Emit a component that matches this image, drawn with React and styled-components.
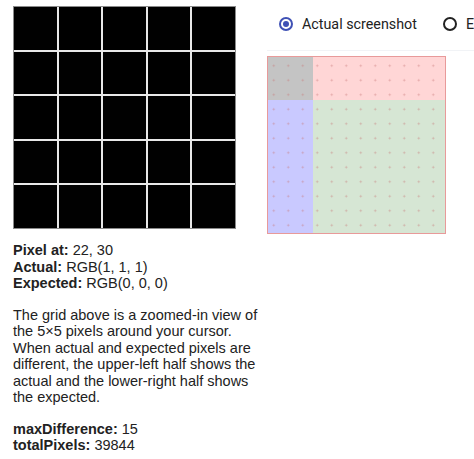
import React from "react";
import styled, { createGlobalStyle } from "styled-components";

const GlobalStyle = createGlobalStyle`
  html, body {
    margin: 0;
    padding: 0;
    background: #fff;
    overflow: hidden;
  }
  body {
    font-family: "Liberation Sans", Arial, sans-serif;
    color: #222;
  }
`;

const Page = styled.div`
  display: flex;
  gap: 4px;
  padding: 6px 0 0 13px;
  width: 640px;
`;

const LeftColumn = styled.div`
  width: 250px;
  display: flex;
  flex-direction: column;
`;

const Grid = styled.div`
  display: grid;
  grid-template-columns: repeat(5, 42.6px);
  grid-auto-rows: 42.6px;
  gap: 2px;
  width: fit-content;
  border: 1px solid #8a8a8a;
  background: #e8e8e8;
`;

const Cell = styled.div`
  background: ${(p) => p.color};
`;

const Info = styled.div`
  margin-top: ${(p) => p.$top || 0}px;
  font-size: 14.5px;
  line-height: 16.6px;
  color: #222;
`;

const Label = styled.b`
  font-weight: bold;
`;

const Paragraph = styled.p`
  margin: 15px 0 15px;
  font-size: 14.5px;
  line-height: 16.5px;
  color: #222;
`;

const RightColumn = styled.div`
  display: flex;
  flex-direction: column;
`;

const RadioGroup = styled.div`
  display: flex;
  align-items: center;
  gap: 26px;
  height: 36px;
  margin-left: 12px;
  white-space: nowrap;
  font-family: Roboto, "Noto Sans", sans-serif;
  font-size: 14.3px;
  color: #222;
`;

const RadioOption = styled.label`
  display: flex;
  align-items: center;
  gap: 9px;
`;

const RadioCircle = styled.span`
  width: 14px;
  height: 14px;
  box-sizing: border-box;
  border-radius: 50%;
  border: 2px solid ${(p) => (p.checked ? "#3f51b5" : "#222")};
  display: flex;
  align-items: center;
  justify-content: center;

  &::after {
    content: "";
    display: ${(p) => (p.checked ? "block" : "none")};
    width: 6px;
    height: 6px;
    border-radius: 50%;
    background: #3f51b5;
  }
`;

const Divider = styled.div`
  height: 1px;
  background: #f1f3f6;
  margin: 8px 0 5px;
  width: 220px;
`;

const DiffBox = styled.div`
  position: relative;
  display: grid;
  grid-template-columns: 45px 132px;
  grid-template-rows: 43px 133px;
  border: 1px solid #e89a9a;
  width: fit-content;

  &::after {
    content: "";
    position: absolute;
    inset: 0;
    background-image: radial-gradient(circle, rgba(200, 120, 120, 0.5) 0.8px, transparent 1.2px);
    background-size: 14.5px 14.5px;
    background-position: -1.5px 1.5px;
  }
`;

const Region = styled.div`
  background: ${(p) => p.color};
`;

const cells = Array.from({ length: 25 }, (_, i) => (i % 3 === 0 ? "#010101" : "#000"));

export default function App() {
  return (
    <>
      <GlobalStyle />
      <Page>
        <LeftColumn>
          <Grid>
            {cells.map((c, i) => (
              <Cell key={i} color={c} />
            ))}
          </Grid>
          <Info $top={13}>
            <div>
              <Label>Pixel at:</Label> 22, 30
            </div>
            <div>
              <Label>Actual:</Label> RGB(1, 1, 1)
            </div>
            <div>
              <Label>Expected:</Label> RGB(0, 0, 0)
            </div>
          </Info>
          <Paragraph>
            The grid above is a zoomed-in view of the 5×5 pixels around your cursor. When actual and
            expected pixels are different, the upper-left half shows the actual and the lower-right
            half shows the expected.
          </Paragraph>
          <Info>
            <div>
              <Label>maxDifference:</Label> 15
            </div>
            <div>
              <Label>totalPixels:</Label> 39844
            </div>
          </Info>
        </LeftColumn>
        <RightColumn>
          <RadioGroup>
            <RadioOption>
              <RadioCircle checked />
              Actual screenshot
            </RadioOption>
            <RadioOption>
              <RadioCircle />
              Expected screenshot
            </RadioOption>
          </RadioGroup>
          <Divider />
          <DiffBox>
            <Region color="#c4c4c4" />
            <Region color="#ffd6d6" />
            <Region color="#c9c9ff" />
            <Region color="#d6e6d4" />
          </DiffBox>
        </RightColumn>
      </Page>
    </>
  );
}
